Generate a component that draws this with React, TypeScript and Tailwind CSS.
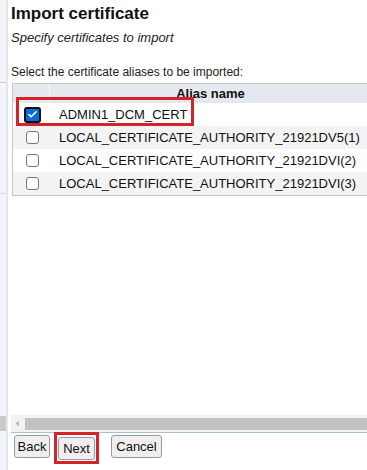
import { Check, ChevronLeft } from 'lucide-react'

const ALIASES = [
  'ADMIN1_DCM_CERT',
  'LOCAL_CERTIFICATE_AUTHORITY_21921DV5(1)',
  'LOCAL_CERTIFICATE_AUTHORITY_21921DVI(2)',
  'LOCAL_CERTIFICATE_AUTHORITY_21921DVI(3)',
]

export default function App() {
  return (
    <div
      className="w-[367px] h-[470px] overflow-hidden bg-white flex text-[#111]"
      style={{ fontFamily: 'Arial, "Liberation Sans", sans-serif' }}
    >
      {/* left strip of the panel behind */}
      <div className="w-[8px] shrink-0 bg-[#f4f5f8] border-r-2 border-[#e3e6ec] flex flex-col">
        <div className="h-[82px]" />
        <div className="h-px w-[6px] bg-[#c9ccd2]" />
        <div className="h-[110px]" />
        <div className="h-px w-[6px] bg-[#d6d8dc]" />
        <div className="h-[222px]" />
        <div className="h-[15px] w-[6px] bg-[#c9c9c9]" />
      </div>

      <div className="flex-1 min-w-0 flex flex-col pl-[3px]">
        <h1 className="text-[17px] font-bold leading-none mt-[5px]">Import certificate</h1>
        <p className="text-[13px] italic leading-none mt-[9px] text-[#222]">Specify certificates to import</p>

        <p className="text-[12px] leading-none mt-[22px] text-[#222]">Select the certificate aliases to be imported:</p>

        <div className="mt-[5px] ml-px w-[420px] border border-[#c4c7cc]">
          <div className="flex h-[19px] bg-[#e5e9ef]">
            <div className="w-[37px] border-r border-[#f4f6f9]" />
            <div className="flex-1 text-center text-[13px] font-bold leading-[19px] pr-[60px]">Alias name</div>
          </div>
          {ALIASES.map((name, i) => (
            <div key={name} className={`flex h-[23px] items-center ${i % 2 === 1 ? 'bg-[#f3f3f3]' : 'bg-white'}`}>
              <div className="w-[37px] flex justify-center">
                {i === 0 ? (
                  <div className="w-[17px] h-[16px] rounded-[3px] border-2 border-[#111] bg-[#0a6cdc] flex items-center justify-center ml-[1px]">
                    <Check size={11} color="white" strokeWidth={3.5} />
                  </div>
                ) : (
                  <div className="w-[13px] h-[13px] rounded-[3px] border border-[#767676] bg-white ml-[1px]" />
                )}
              </div>
              <span className="ml-[9px] text-[13px] whitespace-nowrap">{name}</span>
            </div>
          ))}
        </div>

        <div className="flex-1" />

        {/* horizontal scrollbar */}
        <div className="h-[17px] bg-[#f1f1f1] flex items-center -mr-px">
          <ChevronLeft size={9} color="#a3a3a3" fill="#a3a3a3" className="ml-[2px]" />
          <div className="ml-[3px] flex-1 h-[12px] bg-[#c1c1c1]" />
        </div>
        <div className="h-px bg-[#a9c1d6]" />

        <div className="flex items-start h-[37px]">
          <button className="ml-[3px] mt-[2px] w-[36px] h-[23px] text-[13px] border border-[#9a9a9a] rounded-[3px] bg-[#efefef]">Back</button>
          <div className="ml-[4px] -mt-[1px] border-[3px] border-[#d5222c] p-px">
            <button className="w-[37px] h-[23px] text-[13px] border border-[#9a9a9a] rounded-[3px] bg-[#efefef]">Next</button>
          </div>
          <button className="ml-[12px] mt-[2px] w-[51px] h-[23px] text-[13px] border border-[#9a9a9a] rounded-[3px] bg-[#efefef]">Cancel</button>
        </div>
      </div>

      {/* red highlight over the first row */}
      <div className="absolute left-[16px] top-[97px] w-[178px] h-[29px] border-[3px] border-[#d5222c] pointer-events-none" />
    </div>
  )
}
